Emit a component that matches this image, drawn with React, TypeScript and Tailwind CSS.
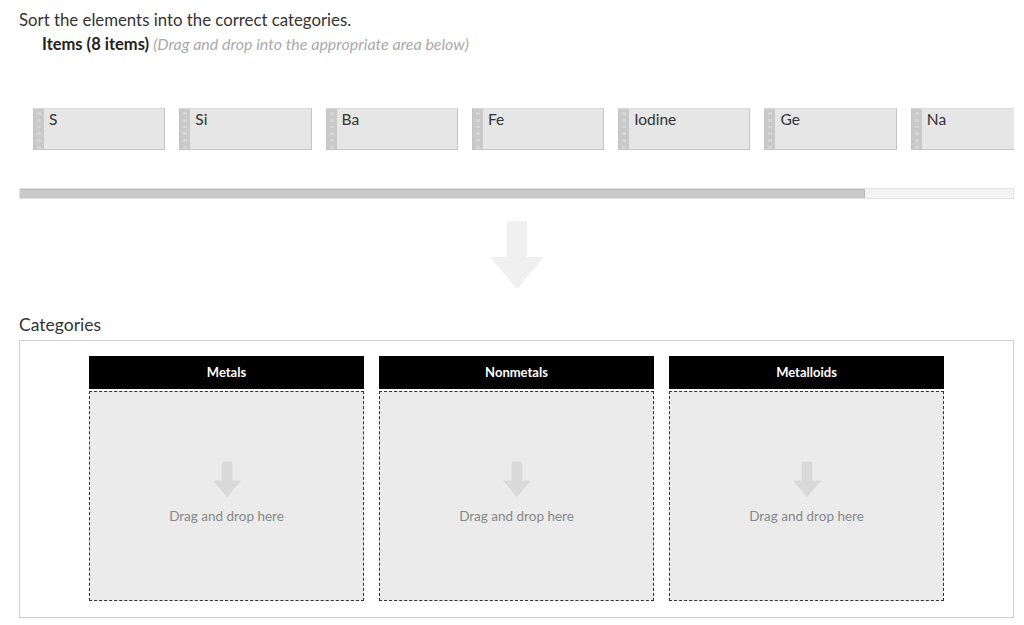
import React from 'react';

const items = ['S', 'Si', 'Ba', 'Fe', 'Iodine', 'Ge', 'Na'];
const categories = ['Metals', 'Nonmetals', 'Metalloids'];

function Grip() {
  return (
    <div className="w-[10px] shrink-0 bg-[#c9c9c9] flex flex-col items-center gap-[4px] pt-[3px]">
      {[0, 1, 2, 3, 4, 5].map((i) => (
        <span key={i} className="block w-[4px] h-[3px] bg-[#d6d6d6]" />
      ))}
    </div>
  );
}

function DownArrow({ className }: { className?: string }) {
  return (
    <svg viewBox="0 0 54 68" className={className}>
      <path d="M17 0 H37 V36 H54 L27 68 L0 36 H17 Z" fill="currentColor" />
    </svg>
  );
}

export default function App() {
  return (
    <div className="min-h-screen bg-white text-[#333] font-['Lato','Open_Sans',sans-serif] pl-[19px] pt-[10px]">
      <p className="text-[16.8px] leading-[20px]">Sort the elements into the correct categories.</p>
      <div className="pl-[23px] mt-[4px] leading-[20px]">
        <span className="text-[16.5px] font-bold text-[#222]">Items (8 items)</span>{' '}
        <span className="text-[16px] italic text-[#aaa]">(Drag and drop into the appropriate area below)</span>
      </div>

      {/* items strip */}
      <div className="mt-[54px] w-[995px] overflow-hidden">
        <div className="flex gap-[14px] pl-[14px]">
          {items.map((it) => (
            <div
              key={it}
              className="w-[132.3px] h-[42px] shrink-0 flex bg-[#e6e6e6] border border-[#c4c4c4] border-t-[#d9d9d9]"
            >
              <Grip />
              <span className="pl-[5px] pt-[1px] text-[15.5px] leading-[18px] text-[#333]">{it}</span>
            </div>
          ))}
        </div>
        <div className="mt-[38px] h-[11px] w-[995px] flex bg-[#f3f3f3] border border-[#e3e3e3]">
          <div className="w-[845px] h-full bg-[#c9c9c9] border-r border-[#b8b8b8] border-t border-t-[#bbbbbb]" />
        </div>
      </div>

      <div className="w-[995px] flex justify-center mt-[22px]">
        <DownArrow className="w-[54px] h-[68px] text-[#f0f0f0]" />
      </div>

      <p className="mt-[26px] text-[17.5px] leading-[20px] text-[#333]">Categories</p>
      <div className="mt-[5px] w-[995px] border border-[#cfcfcf] pt-[15px] pb-[16px] flex justify-center gap-[15px]">
        {categories.map((c) => (
          <div key={c} className="w-[275px] flex flex-col">
            <div className="h-[33px] bg-black text-white text-[13px] font-bold flex items-center justify-center">
              {c}
            </div>
            <div className="mt-[2px] h-[210px] bg-[#ebebeb] border border-dashed border-[#333] flex flex-col items-center pt-[69px]">
              <DownArrow className="w-[28px] h-[37px] text-[#d9d9d9]" />
              <span className="mt-[8px] text-[13.5px] text-[#888]">Drag and drop here</span>
            </div>
          </div>
        ))}
      </div>
    </div>
  );
}
